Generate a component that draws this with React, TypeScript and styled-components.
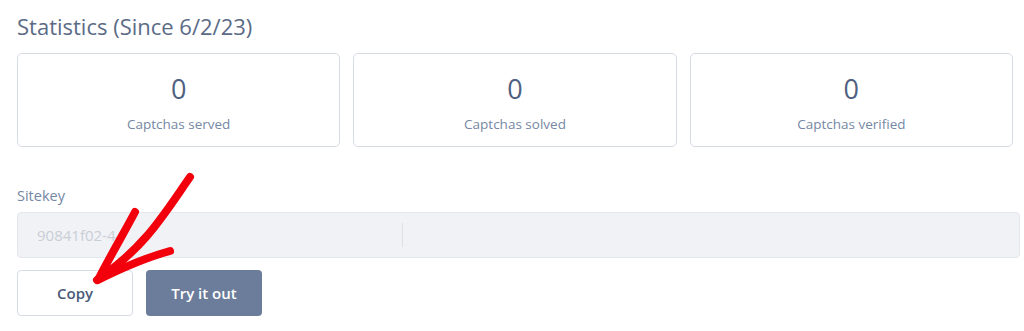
import styled, { createGlobalStyle } from 'styled-components'

const GlobalStyle = createGlobalStyle`
  body {
    margin: 0;
    background: #ffffff;
    font-family: 'Open Sans', 'Noto Sans', sans-serif;
  }
`

const Page = styled.div`
  width: 1024px;
  height: 331px;
  box-sizing: border-box;
  padding: 8px 4px 0 17px;
  overflow: hidden;
`

const Title = styled.h2`
  margin: 0;
  font-size: 22px;
  font-weight: 400;
  line-height: 36px;
  color: #5b6b86;
`

const StatGrid = styled.div`
  margin: 9px 7px 0 0;
  display: grid;
  grid-template-columns: repeat(3, 1fr);
  gap: 13px;
`

const StatCard = styled.div`
  height: 94px;
  box-sizing: border-box;
  border: 1px solid #d6dbe4;
  border-radius: 5px;
  display: flex;
  flex-direction: column;
  align-items: center;
  justify-content: center;
  gap: 8px;
  padding-top: 5px;
`

const StatValue = styled.div`
  font-size: 27px;
  font-weight: 500;
  line-height: 34px;
  color: #4f6080;
`

const StatLabel = styled.div`
  font-size: 13.5px;
  line-height: 20px;
  color: #7687a3;
`

const Field = styled.div`
  margin-top: 38px;
  display: flex;
  flex-direction: column;
  gap: 5px;
`

const FieldLabel = styled.div`
  font-size: 14.5px;
  line-height: 22px;
  color: #7687a3;
`

const KeyBox = styled.div`
  height: 46px;
  box-sizing: border-box;
  background: #f0f2f5;
  border: 1px solid #e4e7ec;
  border-radius: 4px;
  display: flex;
  align-items: center;
  padding-left: 19px;
`

const KeyText = styled.div`
  width: 365px;
  font-size: 15px;
  color: #c9ced7;
`

const Divider = styled.div`
  width: 1px;
  height: 24px;
  background: #dde1e7;
`

const Actions = styled.div`
  position: relative;
  margin-top: 12px;
  display: flex;
  gap: 13px;
`

const Button = styled.button<{ $primary?: boolean }>`
  width: 116px;
  height: 46px;
  box-sizing: border-box;
  background: ${({ $primary }) => ($primary ? '#6b7d9a' : '#ffffff')};
  border: ${({ $primary }) => ($primary ? 'none' : '1px solid #d6dbe4')};
  border-radius: 4px;
  font-family: inherit;
  font-size: 15px;
  font-weight: 600;
  color: ${({ $primary }) => ($primary ? '#ffffff' : '#4a5a77')};
`

const ArrowSvg = styled.svg`
  position: absolute;
  left: 63px;
  top: -101px;
  pointer-events: none;
`

const stats = [
  { value: 0, label: 'Captchas served' },
  { value: 0, label: 'Captchas solved' },
  { value: 0, label: 'Captchas verified' }
]

function Arrow() {
  return (
    <ArrowSvg width="124" height="124" viewBox="0 0 124 124">
      <g fill="none" stroke="#f2000c" strokeWidth="8" strokeLinecap="round" strokeLinejoin="round">
        <path d="M110 8 C 96 28, 82 50, 66 68 C 52 84, 36 98, 17 111" />
        <path d="M55 43 C 45 62, 32 84, 19 109" />
        <path d="M90 82 C 68 88, 42 99, 18 111" />
      </g>
    </ArrowSvg>
  )
}

export default function App() {
  return (
    <Page>
      <GlobalStyle />
      <Title>Statistics (Since 6/2/23)</Title>
      <StatGrid>
        {stats.map((s) => (
          <StatCard key={s.label}>
            <StatValue>{s.value}</StatValue>
            <StatLabel>{s.label}</StatLabel>
          </StatCard>
        ))}
      </StatGrid>
      <Field>
        <FieldLabel>Sitekey</FieldLabel>
        <KeyBox>
          <KeyText>90841f02-4</KeyText>
          <Divider />
        </KeyBox>
      </Field>
      <Actions>
        <Button>Copy</Button>
        <Button $primary>Try it out</Button>
        <Arrow />
      </Actions>
    </Page>
  )
}
